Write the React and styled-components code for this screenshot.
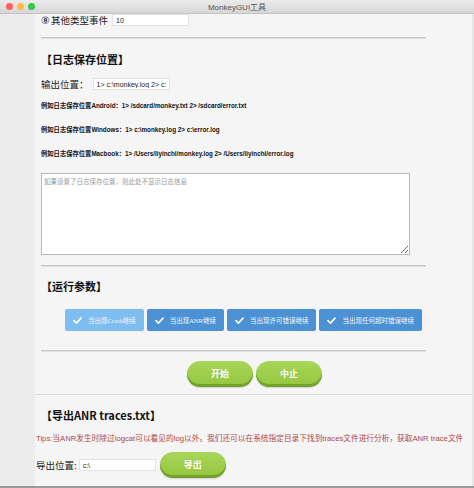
import React from 'react'
import styled, { createGlobalStyle } from 'styled-components'

const Global = createGlobalStyle`
  html, body { margin: 0; padding: 0; }
  body {
    width: 474px;
    height: 488px;
    overflow: hidden;
    font-family: "Noto Sans CJK SC", "Liberation Sans", sans-serif;
    background: #f5f5f5;
  }
`

const CheckIcon = () => (
  <svg width="9" height="7" viewBox="0 0 10 8">
    <path d="M1 4.2 L3.8 7 L9 1.3" fill="none" stroke="#fff" strokeWidth="1.8" strokeLinecap="round" strokeLinejoin="round" />
  </svg>
)

const options = [
  { label: '当出现Crash继续', light: true },
  { label: '当出现ANR继续' },
  { label: '当出现许可错误继续' },
  { label: '当出现任何超时错误继续' },
]

function App() {
  return (
    <Window>
      <Global />
      <TitleBar>
        <Lights>
          <Light color="#fc605c" />
          <Light color="#fdbc40" />
          <Light color="#34c84a" />
        </Lights>
        <Title>MonkeyGUI工具</Title>
      </TitleBar>

      <Body>
        <Sidebar />
        <Main>
          <Upper>
            <Row>
              <Label><Circled>⑧</Circled>其他类型事件</Label>
              <SmallInput value="10" readOnly width={77} />
            </Row>
            <Rule top={11} />

            <Heading top={13}>【日志保存位置】</Heading>

            <Row top={11}>
              <Label>输出位置：</Label>
              <SmallInput value="1> c:\monkey.log 2> c:\u" readOnly width={77} />
            </Row>

            <Example top={11}>例如日志保存位置Android：1&gt; /sdcard/monkey.txt 2&gt; /sdcard/error.txt</Example>
            <Example top={15}>例如日志保存位置Windows：1&gt; c:\monkey.log 2&gt; c:\error.log</Example>
            <Example top={15}>例如日志保存位置Macbook：1&gt; /Users/liyinchi/monkey.log 2&gt; /Users/liyinchi/error.log</Example>

            <LogArea placeholder="如果设置了日志保存位置，则此处不显示日志信息" />

            <Rule top={10} />

            <Heading top={12}>【运行参数】</Heading>

            <Options>
              {options.map((o) => (
                <OptionButton key={o.label} light={o.light}>
                  <CheckIcon />
                  <span>{o.label}</span>
                </OptionButton>
              ))}
            </Options>

            <Rule top={19} />

            <Actions>
              <GreenButton>开始</GreenButton>
              <GreenButton>中止</GreenButton>
            </Actions>
          </Upper>

          <Lower>
            <Heading top={0} indent={5}>【导出ANR traces.txt】</Heading>
            <Tips>Tips:当ANR发生时除过logcat可以看见的log以外，我们还可以在系统指定目录下找到traces文件进行分析，获取ANR trace文件</Tips>
            <ExportRow>
              <Label>导出位置:</Label>
              <SmallInput value="c:\" readOnly width={77} />
              <GreenButton>导出</GreenButton>
            </ExportRow>
          </Lower>
        </Main>
        <RightEdge />
      </Body>
      <BottomBar />
    </Window>
  )
}

export default App

const Window = styled.div`
  width: 474px;
  height: 488px;
  display: flex;
  flex-direction: column;
  background: #f5f5f5;
`

const TitleBar = styled.div`
  height: 14px;
  flex-shrink: 0;
  position: relative;
  display: flex;
  align-items: center;
  justify-content: center;
  background: linear-gradient(#ebebeb, #d6d6d6);
  border-bottom: 1px solid #c4c4c4;
  box-sizing: border-box;
`

const Lights = styled.div`
  position: absolute;
  left: 6px;
  top: 3px;
  display: flex;
  gap: 4px;
`

const Light = styled.span`
  width: 7px;
  height: 7px;
  border-radius: 50%;
  background: ${(p) => p.color};
`

const Title = styled.div`
  font-size: 8px;
  color: #555;
  font-family: "Liberation Sans", "Noto Sans CJK SC", sans-serif;
`

const Body = styled.div`
  flex: 1;
  display: flex;
  min-height: 0;
`

const Sidebar = styled.div`
  width: 35px;
  flex-shrink: 0;
  background: #ececec;
`

const RightEdge = styled.div`
  width: 2px;
  flex-shrink: 0;
  background: #e6e6e6;
`

const Main = styled.div`
  flex: 1;
  display: flex;
  flex-direction: column;
  background: #f5f5f5;
`

const Upper = styled.div`
  padding: 0 0 0 6px;
  height: 381px;
  box-sizing: border-box;
  border-bottom: 1px solid #dcdcdc;
`

const Lower = styled.div`
  padding: 12px 0 0 1px;
`

const Row = styled.div`
  display: flex;
  align-items: center;
  gap: 4px;
  height: 12px;
  margin-top: ${(p) => p.top || 0}px;
`

const Label = styled.span`
  font-size: 9.5px;
  color: #222;
  white-space: nowrap;
`

const Circled = styled.span`
  font-family: "DejaVu Sans", sans-serif;
  font-size: 10px;
  margin-right: 1px;
`

const SmallInput = styled.input`
  width: ${(p) => p.width}px;
  height: 12px;
  box-sizing: border-box;
  border: 1px solid #e2e2e2;
  background: #fff;
  font-size: 7px;
  padding: 0 3px;
  font-family: "Liberation Sans", sans-serif;
  color: #222;
  outline: none;
`

const Rule = styled.hr`
  width: 385px;
  margin: ${(p) => p.top}px 0 0 0;
  border: none;
  height: 1px;
  background: #c8c8c8;
  box-shadow: 0 1px 0 #e0e0e0;
`

const Heading = styled.div`
  margin-top: ${(p) => p.top}px;
  margin-left: ${(p) => p.indent || 0}px;
  font-size: 11px;
  font-weight: bold;
  color: #111;
  line-height: 16px;
  white-space: nowrap;
`

const Example = styled.div`
  margin-top: ${(p) => p.top}px;
  font-size: 6.3px;
  font-weight: bold;
  color: #111;
  line-height: 9px;
  white-space: nowrap;
  font-family: "Liberation Sans", "Noto Sans CJK SC", sans-serif;
`

const LogArea = styled.textarea`
  display: block;
  margin-top: 15px;
  width: 369px;
  height: 82px;
  box-sizing: border-box;
  border: 1px solid #b8b8b8;
  background: #fff;
  font-size: 6.5px;
  padding: 2px;
  resize: both;
  font-family: "Noto Sans CJK SC", sans-serif;
  &::placeholder { color: #999; }
`

const Options = styled.div`
  display: flex;
  gap: 3px;
  margin: 15px 0 0 24px;
`

const OptionButton = styled.div`
  display: flex;
  align-items: center;
  gap: 6px;
  height: 22px;
  padding: 0 8px;
  border-radius: 2px;
  background: ${(p) => (p.light ? '#7dbdf0' : '#4b91d4')};
  color: #f2f7fd;
  font-size: 6.5px;
  white-space: nowrap;
  font-family: "Liberation Serif", "Noto Sans CJK SC", serif;
`

const Actions = styled.div`
  display: flex;
  justify-content: center;
  gap: 3px;
  margin: 10px 0 0 0;
  padding-right: 4px;
`

const GreenButton = styled.button`
  width: 66px;
  height: 26px;
  border: none;
  border-radius: 13px;
  background: linear-gradient(#a9d65a, #93c63d);
  box-shadow: inset 0 -3px 0 #74a32d, 0 1px 1px rgba(0, 0, 0, 0.15);
  color: #fff;
  font-weight: bold;
  font-size: 9px;
  padding-bottom: 3px;
  font-family: "Noto Sans CJK SC", sans-serif;
`

const Tips = styled.div`
  margin-top: 9px;
  font-size: 7.7px;
  color: #b04843;
  white-space: nowrap;
  font-family: "Liberation Sans", "Noto Sans CJK SC", sans-serif;
`

const ExportRow = styled.div`
  display: flex;
  align-items: center;
  gap: 2px;
  margin-top: 9px;
  ${GreenButton} { margin-left: 2px; }
`

const BottomBar = styled.div`
  height: 2px;
  flex-shrink: 0;
  background: #9a9a9a;
`
